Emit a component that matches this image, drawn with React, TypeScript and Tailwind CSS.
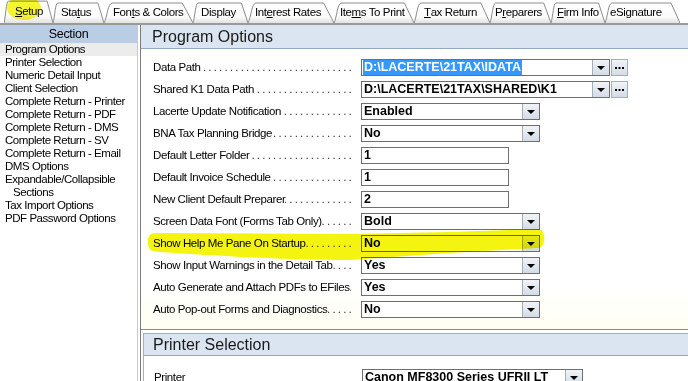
import React from "react";

type TabDef = { label: React.ReactNode; w: string; pl: string; active?: boolean };

const U = ({ children }: { children: React.ReactNode }) => <span className="underline underline-offset-[1px]">{children}</span>;

const tabs: TabDef[] = [
  { label: <><U>S</U>etup</>, w: "w-[49px]", pl: "pl-[11px]", active: true },
  { label: <>Sta<U>t</U>us</>, w: "w-[51px]", pl: "pl-[8px]" },
  { label: <>Fon<U>t</U>s &amp; Colors</>, w: "w-[89px]", pl: "pl-[9px]" },
  { label: <>Display</>, w: "w-[55px]", pl: "pl-[8px]" },
  { label: <>Int<U>e</U>rest Rates</>, w: "w-[86px]", pl: "pl-[7px]" },
  { label: <>Ite<U>m</U>s To Print</>, w: "w-[80px]", pl: "pl-[6px]" },
  { label: <><U>T</U>ax Return</>, w: "w-[76px]", pl: "pl-[10px]" },
  { label: <>P<U>r</U>eparers</>, w: "w-[61px]", pl: "pl-[5px]" },
  { label: <><U>F</U>irm Info</>, w: "w-[54px]", pl: "pl-[6px]" },
  { label: <>eSignature</>, w: "w-[75px]", pl: "pl-[5px]" },
];

function Tab({ t }: { t: TabDef }) {
  return (
    <div className={`relative shrink-0 ${t.w} ${t.active ? "h-[23px]" : "h-[21px]"}`}>
      <svg className="absolute inset-0 w-full h-full" preserveAspectRatio="none" viewBox="0 0 100 21">
        <defs>
          <linearGradient id="tg" x1="0" y1="0" x2="0" y2="1">
            <stop offset="0" stopColor="#ffffff" />
            <stop offset="0.7" stopColor="#fbfbfb" />
            <stop offset="1" stopColor="#e2e2e2" />
          </linearGradient>
        </defs>
        <path d="M0 21 C4 14 4 2 9 1 L88 1 L100 21" fill="url(#tg)" stroke="#8c8c8c" strokeWidth="1" vectorEffect="non-scaling-stroke" />
      </svg>
      <div className={`relative h-full flex items-center ${t.pl} text-[11.5px] tracking-[-0.4px] text-black whitespace-nowrap`}>{t.label}</div>
    </div>
  );
}

const sections = [
  "Printer Selection",
  "Numeric Detail Input",
  "Client Selection",
  "Complete Return - Printer",
  "Complete Return - PDF",
  "Complete Return - DMS",
  "Complete Return - SV",
  "Complete Return - Email",
  "DMS Options",
  "Expandable/Collapsible",
];

const dots = ".".repeat(60);

function Leader({ label }: { label: string }) {
  return (
    <div className="flex w-[208px] pr-[7px] overflow-hidden whitespace-nowrap text-[11.5px] tracking-[-0.4px]">
      <span className="shrink-0">{label}</span>
      <span className="flex-1 overflow-hidden [direction:rtl] tracking-[2.2px] text-[#333]">{dots}</span>
    </div>
  );
}

function DropBtn() {
  return (
    <div className="w-[17px] h-full shrink-0 bg-gradient-to-b from-[#f1f4f8] to-[#d3dce6] border-l border-[#a4aebb] flex items-center justify-center">
      <svg width="8" height="4" viewBox="0 0 8 4">
        <path d="M0 0H8L4 4Z" fill="#000" />
      </svg>
    </div>
  );
}

function Combo({ value, w, sel }: { value: string; w: string; sel?: boolean }) {
  return (
    <div className={`${w} h-[17px] border border-[#6f6f6f] bg-white flex`}>
      <div className="flex-1 flex items-center pl-[1px] text-[12.5px] font-bold leading-none whitespace-nowrap overflow-hidden">
        {sel ? <span className="bg-[#3399ff] text-white px-[1px] py-[1px]">{value}</span> : <span className="px-[1px]">{value}</span>}
      </div>
      <DropBtn />
    </div>
  );
}

function TextBox({ value }: { value: string }) {
  return (
    <div className="w-[148px] h-[17px] border border-[#6f6f6f] bg-white flex items-center pl-[2px] text-[12.5px] font-bold leading-none">
      {value}
    </div>
  );
}

function Ellipsis() {
  return (
    <div className="ml-[1px] w-[17px] h-[17px] border border-[#a4aebb] bg-gradient-to-b from-[#f1f4f8] to-[#d3dce6] flex items-center justify-center">
      <svg width="9" height="2" viewBox="0 0 9 2">
        <rect x="0" y="0" width="2" height="2" fill="#000" />
        <rect x="3.5" y="0" width="2" height="2" fill="#000" />
        <rect x="7" y="0" width="2" height="2" fill="#000" />
      </svg>
    </div>
  );
}

function Row({ label, children }: { label: string; children: React.ReactNode }) {
  return (
    <div className="flex items-center h-[17px] mb-[5px]">
      <Leader label={label} />
      {children}
    </div>
  );
}

export default function App() {
  return (
    <div className="relative w-[688px] h-[381px] overflow-hidden bg-white font-['Liberation_Sans',Arial,sans-serif] text-black">
      {/* tab strip */}
      <div className="h-[25px] flex items-end pl-[4px] border-b-2 border-[#9a9a9a]">
        {tabs.map((t, i) => (
          <Tab key={i} t={t} />
        ))}
      </div>

      <div className="flex h-[356px]">
        {/* section list */}
        <div className="w-[138px] shrink-0 border-r border-[#c9c9c9] text-[11.5px] tracking-[-0.45px]">
          <div className="h-[18px] bg-[#b9cde5] flex items-center justify-center text-[12.5px] tracking-[-0.3px]">Section</div>
          <div className="h-[13px] leading-[13px] pl-[5px] bg-[#ececec]">Program Options</div>
          {sections.map(s => (
            <div key={s} className="h-[13px] leading-[13px] pl-[5px] whitespace-nowrap">{s}</div>
          ))}
          <div className="h-[13px] leading-[13px] pl-[13px]">Sections</div>
          <div className="h-[13px] leading-[13px] pl-[5px]">Tax Import Options</div>
          <div className="h-[13px] leading-[13px] pl-[5px]">PDF Password Options</div>
        </div>

        <div className="w-[2px] shrink-0" />

        {/* options pane */}
        <div className="flex-1 border-l border-[#7c7c7c] min-w-0">
          <div className="border-b border-[#8c8c8c]">
            <div className="h-[24px] bg-[#dbe5f1] border-b border-[#93a9c3] flex items-center pl-[11px] text-[16px] text-[#1a1a1a] whitespace-nowrap">
              Program Options
            </div>
            <div className="pt-[10px] pl-[12px] pb-[6px] bg-gradient-to-b from-white from-85% to-[#fffff2]">
              <Row label="Data Path">
                <Combo value="D:\LACERTE\21TAX\IDATA" w="w-[249px]" sel />
                <Ellipsis />
              </Row>
              <Row label="Shared K1 Data Path">
                <Combo value="D:\LACERTE\21TAX\SHARED\K1" w="w-[249px]" />
                <Ellipsis />
              </Row>
              <Row label="Lacerte Update Notification">
                <Combo value="Enabled" w="w-[179px]" />
              </Row>
              <Row label="BNA Tax Planning Bridge">
                <Combo value="No" w="w-[179px]" />
              </Row>
              <Row label="Default Letter Folder">
                <TextBox value="1" />
              </Row>
              <Row label="Default Invoice Schedule">
                <TextBox value="1" />
              </Row>
              <Row label="New Client Default Preparer">
                <TextBox value="2" />
              </Row>
              <Row label="Screen Data Font (Forms Tab Only)  ">
                <Combo value="Bold" w="w-[179px]" />
              </Row>
              <Row label="Show Help Me Pane On Startup ">
                <Combo value="No" w="w-[179px]" />
              </Row>
              <Row label="Show Input Warnings in the Detail Tab ">
                <Combo value="Yes" w="w-[179px]" />
              </Row>
              <Row label="Auto Generate and Attach PDFs to EFiles">
                <Combo value="Yes" w="w-[179px]" />
              </Row>
              <Row label="Auto Pop-out Forms and Diagnostics">
                <Combo value="No" w="w-[179px]" />
              </Row>
            </div>
          </div>

          <div className="mt-[3px] ml-[2px] border-t border-l border-[#9fb0c4]">
            <div className="h-[22px] bg-[#dbe5f1] border-b border-[#93a9c3] flex items-center pl-[9px] text-[16px] text-[#1a1a1a] whitespace-nowrap">
              Printer Selection
            </div>
            <div className="pt-[13px] pl-[10px] flex items-center">
              <div className="w-[208px] text-[11.5px] tracking-[-0.4px]">Printer</div>
              <Combo value="Canon MF8300 Series UFRII LT" w="w-[221px]" />
            </div>
          </div>
        </div>
      </div>

      {/* highlighter marks */}
      <svg className="absolute inset-0 pointer-events-none mix-blend-multiply" width="688" height="381" viewBox="0 0 688 381">
        <ellipse cx="24" cy="8" rx="17" ry="12" fill="#f6f628" opacity="0.95" />
        <path
          d="M148 242 C148 234 150 233 160 233 L350 234 L450 232 L538 229 C546 229 547 247 538 248 L450 253 L350 260 C300 260 250 258 160 252 C150 251 148 250 148 242 Z"
          fill="#f4f410"
        />
      </svg>
    </div>
  );
}
